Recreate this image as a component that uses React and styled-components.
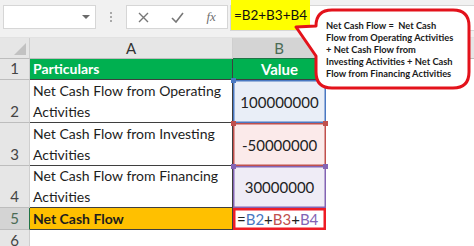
import React from 'react'
import styled, { createGlobalStyle } from 'styled-components'

const GlobalStyle = createGlobalStyle`
    body {
        margin: 0;
        background: #fff;
        font-family: Lato, 'Open Sans', sans-serif;
    }
`

const Page = styled.div`
    position: relative;
    width: 474px;
    height: 246px;
    overflow: hidden;
    background: #fff;
`

const FormulaBar = styled.div`
    display: flex;
    align-items: flex-start;
    height: 38px;
    padding-top: 5px;
    box-sizing: border-box;
    background: #f1f1f1;
    border-bottom: 1px solid #e2e2e2;
`

const NameBox = styled.div`
    position: relative;
    margin-left: 3px;
    width: 93px;
    height: 24px;
    box-sizing: border-box;
    background: #fff;
    border: 1px solid #d6d6d6;

    &::after {
        content: '';
        position: absolute;
        right: 5px;
        top: 9px;
        border-left: 4px solid transparent;
        border-right: 4px solid transparent;
        border-top: 4px solid #6a6a6a;
    }
`

const Dots = styled.div`
    width: 30px;
    height: 24px;
    display: flex;
    flex-direction: column;
    align-items: center;
    justify-content: center;
    gap: 2px;

    span {
        width: 2px;
        height: 2px;
        background: #a9a9a9;
    }
`

const ButtonBox = styled.div`
    display: flex;
    align-items: center;
    justify-content: space-around;
    width: 102px;
    height: 24px;
    box-sizing: border-box;
    background: #fff;
    border: 1px solid #d6d6d6;
    color: #6f6f6f;
`

const FxLabel = styled.span`
    font-family: 'Liberation Serif', serif;
    font-style: italic;
    font-size: 13px;
`

const FormulaInput = styled.div`
    flex: 1;
    margin-left: 2px;
    height: 24px;
    background: #fff;
    border: 1px solid #d6d6d6;
    border-right: none;
`

const Highlight = styled.div`
    margin-top: -6px;
    width: 79px;
    height: 30px;
    display: flex;
    align-items: center;
    justify-content: center;
    background: #ffff00;
    font-family: Lato, sans-serif;
    font-size: 13.5px;
    color: #111;
`

const Sheet = styled.div`
    display: grid;
    grid-template-columns: 30px 203px 93px 1fr;
    grid-template-rows: 21px 21px 43px 43px 42px 22px 22px;
`

const Corner = styled.div`
    position: relative;
    background: #e6e6e6;
    border-right: 1px solid #cfcfcf;
    border-bottom: 1px solid #bdbdbd;

    &::after {
        content: '';
        position: absolute;
        right: 3px;
        bottom: 3px;
        border-left: 12px solid transparent;
        border-bottom: 12px solid #c2c2c2;
    }
`

const ColHead = styled.div`
    display: flex;
    align-items: center;
    justify-content: center;
    background: ${p => (p.$active ? '#d4d4d4' : '#e6e6e6')};
    border-right: 1px solid #cfcfcf;
    border-bottom: 1px solid ${p => (p.$active ? '#217346' : '#bdbdbd')};
    color: ${p => (p.$active ? '#4b6b55' : '#333')};
    font-size: 15px;
`

const HeadFill = styled.div`
    background: #e6e6e6;
    border-bottom: 1px solid #bdbdbd;
`

const RowHead = styled.div`
    display: flex;
    align-items: flex-end;
    justify-content: center;
    padding-bottom: 1px;
    background: ${p => (p.$active ? '#d4d4d4' : '#e6e6e6')};
    border-right: 1px solid ${p => (p.$active ? '#217346' : '#cfcfcf')};
    border-bottom: 1px solid #bdbdbd;
    color: ${p => (p.$active ? '#4b6b55' : '#444')};
    font-size: 15px;
    line-height: 20px;
`

const LabelCell = styled.div`
    display: flex;
    align-items: flex-end;
    padding: 0 0 0 3px;
    background: ${p => p.$bg || '#fff'};
    border-right: 1px solid #3f3f3f;
    border-bottom: 1px solid #3f3f3f;
    color: ${p => p.$color || '#1d1d1d'};
    font-size: 14px;
    font-weight: ${p => (p.$bold ? 700 : 400)};
    line-height: 21px;
`

const HeadValue = styled.div`
    display: flex;
    align-items: center;
    justify-content: center;
    background: #00b050;
    border-bottom: 1px solid #3f3f3f;
    color: #fff;
    font-size: 15px;
    font-weight: 700;
`

const ValueCell = styled.div`
    position: relative;
    display: flex;
    align-items: center;
    justify-content: center;
    background: ${p => p.$bg};
    box-shadow: inset 0 0 0 1.5px ${p => p.$tone};
    color: #222;
    font-size: 15px;

    &::before,
    &::after {
        content: '';
        position: absolute;
        top: -2px;
        width: 5px;
        height: 5px;
        background: ${p => p.$tone};
    }
    &::before {
        left: -2px;
    }
    &::after {
        right: -2px;
    }
`

const EditCell = styled.div`
    display: flex;
    align-items: center;
    padding-left: 4px;
    background: #fff;
    box-shadow: inset 0 0 0 2.5px #ee1c25;
    font-size: 15px;
    color: #222;
`

const Ref = styled.span`
    color: ${p => p.$tone};
`

const Blank = styled.div`
    background: #fff;
`

const Callout = styled.div`
    position: absolute;
    left: 292px;
    top: 6px;
    width: 182px;
    height: 86px;
`

const CalloutText = styled.div`
    position: absolute;
    left: 34px;
    top: 14px;
    white-space: nowrap;
    font-family: Lato, sans-serif;
    font-size: 9.3px;
    font-weight: 700;
    line-height: 12px;
    color: #1a1a1a;
`

const BLUE = '#4a78c2'
const RED = '#c0504d'
const PURPLE = '#8364b4'

const App = () => {
    return (
        <Page>
            <GlobalStyle />
            <FormulaBar>
                <NameBox />
                <Dots>
                    <span />
                    <span />
                    <span />
                </Dots>
                <ButtonBox>
                    <svg width='11' height='11' viewBox='0 0 11 11'>
                        <path d='M1 1 L10 10 M10 1 L1 10' stroke='#777' strokeWidth='1.4' />
                    </svg>
                    <svg width='13' height='11' viewBox='0 0 13 11'>
                        <path d='M1 6 L5 10 L12 1' stroke='#777' strokeWidth='1.6' fill='none' />
                    </svg>
                    <FxLabel>fx</FxLabel>
                </ButtonBox>
                <FormulaInput>
                    <Highlight>=B2+B3+B4</Highlight>
                </FormulaInput>
            </FormulaBar>

            <Sheet>
                <Corner />
                <ColHead>A</ColHead>
                <ColHead $active>B</ColHead>
                <HeadFill />

                <RowHead>1</RowHead>
                <LabelCell $bg='#00b050' $color='#fff' $bold>
                    Particulars
                </LabelCell>
                <HeadValue>Value</HeadValue>
                <Blank />

                <RowHead>2</RowHead>
                <LabelCell>Net Cash Flow from Operating Activities</LabelCell>
                <ValueCell $bg='#e9eef7' $tone={BLUE}>100000000</ValueCell>
                <Blank />

                <RowHead>3</RowHead>
                <LabelCell>Net Cash Flow from Investing Activities</LabelCell>
                <ValueCell $bg='#fbeaea' $tone={RED}>-50000000</ValueCell>
                <Blank />

                <RowHead>4</RowHead>
                <LabelCell>Net Cash Flow from Financing Activities</LabelCell>
                <ValueCell $bg='#efecf6' $tone={PURPLE}>30000000</ValueCell>
                <Blank />

                <RowHead $active>5</RowHead>
                <LabelCell $bg='#ffc000' $bold>
                    Net Cash Flow
                </LabelCell>
                <EditCell>
                    =<Ref $tone={BLUE}>B2</Ref>+<Ref $tone={RED}>B3</Ref>+
                    <Ref $tone={PURPLE}>B4</Ref>
                </EditCell>
                <Blank />

                <RowHead>6</RowHead>
                <Blank />
                <Blank />
                <Blank />
            </Sheet>

            <Callout>
                <svg width='182' height='86' viewBox='0 0 182 86'>
                    <path
                        d='M24 20 L4 21 L24 50 L24 66 Q24 82 40 82 L161 82 Q177 82 177 66 L177 20 Q177 4 161 4 L40 4 Q24 4 24 20 Z'
                        fill='#fff'
                        stroke='#e3121b'
                        strokeWidth='3'
                        strokeLinejoin='round'
                    />
                </svg>
                <CalloutText>
                    Net Cash Flow = &nbsp;Net Cash
                    <br />
                    Flow from Operating Activities
                    <br />
                    + Net Cash Flow from
                    <br />
                    Investing Activities + Net Cash
                    <br />
                    Flow from Financing Activities
                </CalloutText>
            </Callout>
        </Page>
    )
}

export default App
